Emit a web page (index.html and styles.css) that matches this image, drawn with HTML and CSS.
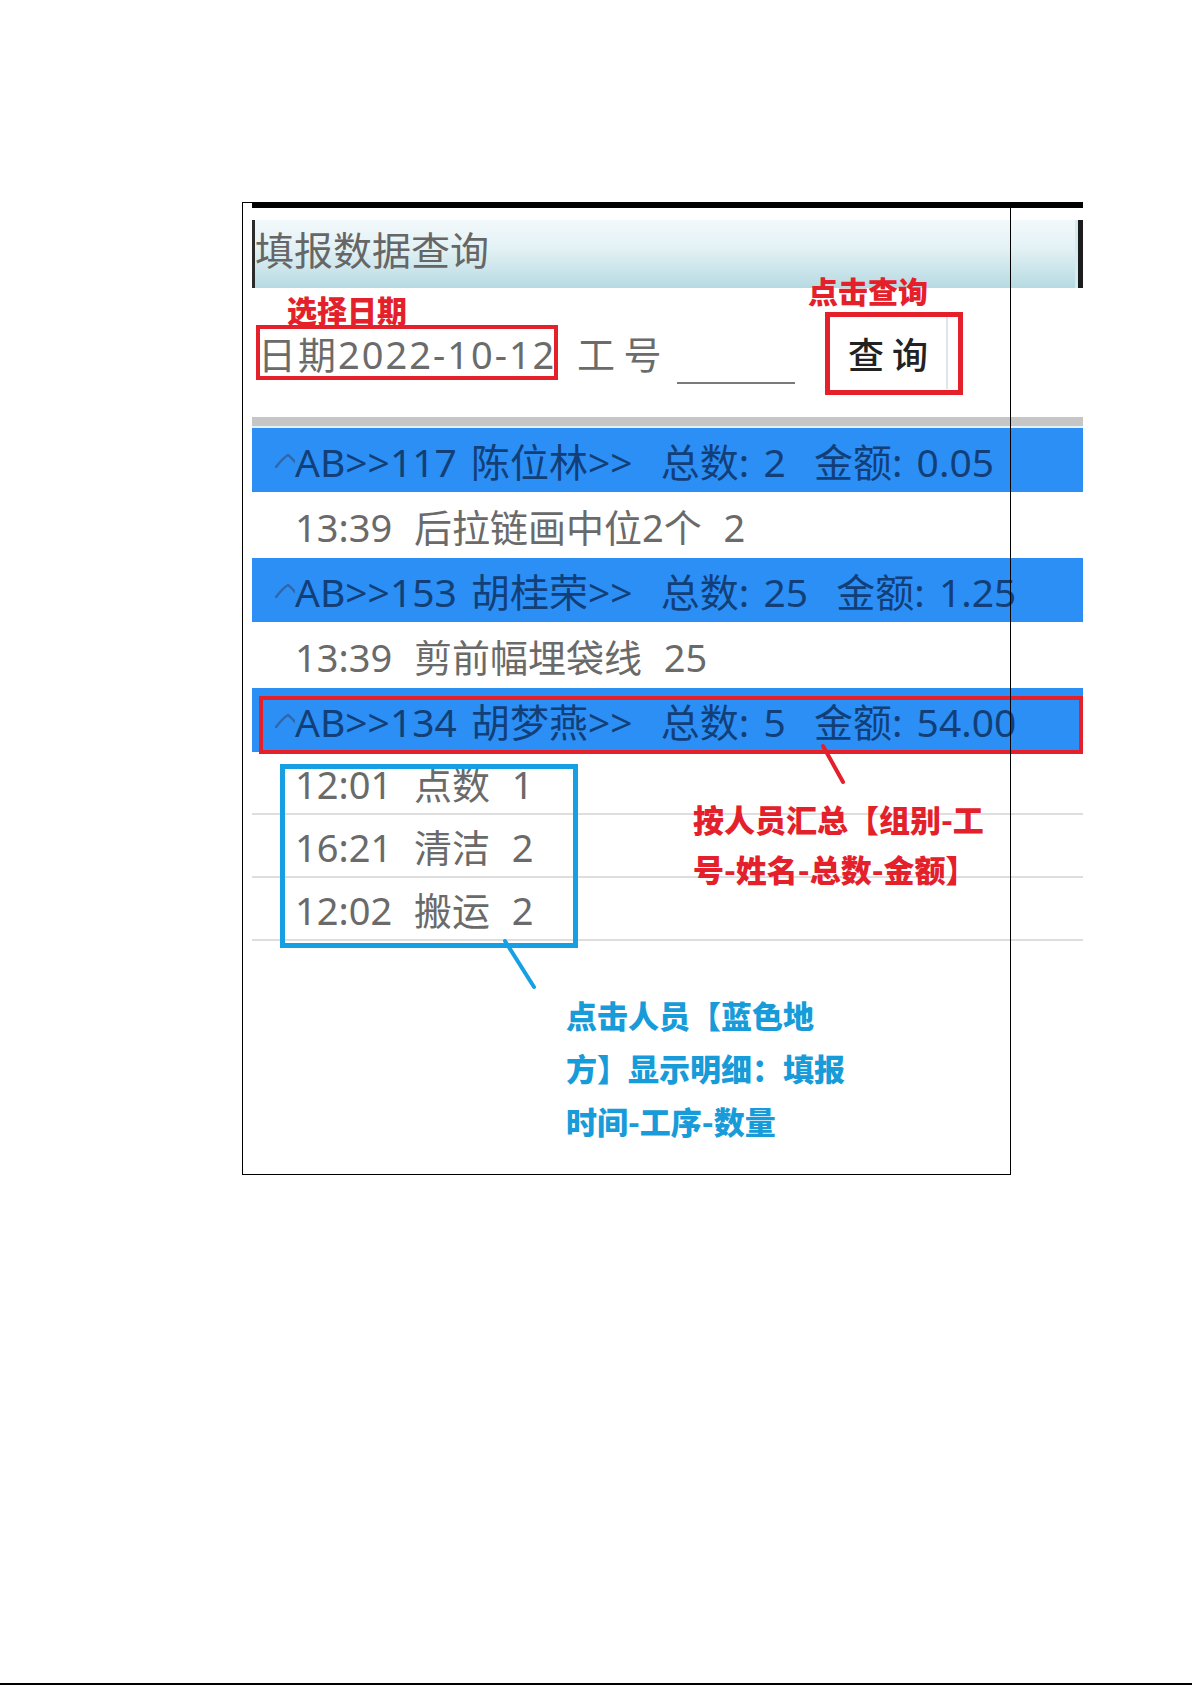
FILE: index.html
```html
<!DOCTYPE html>
<html lang="zh-CN">
<head>
    <meta charset="UTF-8">
    <meta name="viewport" content="width=device-width, initial-scale=1.0">
    <title>填报数据查询</title>
    <link rel="stylesheet" href="styles.css">
</head>
<body>
    <div class="page">
        <div class="frame">
            <div class="screen">
                <div class="status-bar"></div>
                <div class="title-bar">填报数据查询</div>

                <div class="query-row">
                    <span class="date">日期2022-10-12</span>
                    <span class="job-label">工 号</span>
                    <span class="job-input"></span>
                    <button type="button" class="query-btn">查 询</button>
                </div>
                <div class="divider"></div>

                <div class="group">
                    <div class="group-head"><svg class="caret" viewBox="0 0 20 16"><path d="M1 15 Q8 6 13 3 Q16 5 20 10"/></svg>AB&gt;&gt;117 陈位林&gt;&gt;  总数: 2  金额: 0.05</div>
                    <div class="item">13:39  后拉链画中位2个  2</div>
                </div>
                <div class="group">
                    <div class="group-head"><svg class="caret" viewBox="0 0 20 16"><path d="M1 15 Q8 6 13 3 Q16 5 20 10"/></svg>AB&gt;&gt;153 胡桂荣&gt;&gt;  总数: 25  金额: 1.25</div>
                    <div class="item">13:39  剪前幅埋袋线  25</div>
                </div>
                <div class="group open">
                    <div class="group-head"><svg class="caret" viewBox="0 0 20 16"><path d="M1 15 Q8 6 13 3 Q16 5 20 10"/></svg>AB&gt;&gt;134 胡梦燕&gt;&gt;  总数: 5  金额: 54.00</div>
                    <div class="item">12:01  点数  1</div>
                    <div class="item">16:21  清洁  2</div>
                    <div class="item">12:02  搬运  2</div>
                </div>
            </div>

            <!-- callouts drawn over the screen -->
            <div class="note note-red note-date">选择日期</div>
            <div class="mark mark-red mark-date"></div>
            <div class="note note-red note-query">点击查询</div>
            <div class="mark mark-red mark-btn"></div>
            <div class="mark mark-red mark-head"></div>
            <div class="mark mark-blue mark-items"></div>
            <svg class="pointers" width="769" height="973">
                <line x1="581" y1="544" x2="601" y2="580" stroke="#e4212b" stroke-width="4" stroke-linecap="round"/>
                <line x1="263" y1="739" x2="292" y2="785" stroke="#16a0e3" stroke-width="4" stroke-linecap="round"/>
            </svg>
            <div class="note note-red note-sum">按人员汇总【组别-工<br>号-姓名-总数-金额】</div>
            <div class="note note-blue note-detail">点击人员【蓝色地<br>方】显示明细：填报<br>时间-工序-数量</div>
        </div>
    </div>
</body>
</html>
```

FILE: styles.css
```css
* { margin: 0; padding: 0; box-sizing: border-box; }
body { background: #fff; font-family: "Noto Sans", "Noto Sans CJK SC", sans-serif; }
.page { width: 1192px; height: 1685px; padding: 199px 0 0 242px; border-bottom: 2px solid #000; }
.frame { position: relative; width: 769px; height: 973px; }
.frame::after { content: ""; position: absolute; inset: 0; border: 1px solid #000; z-index: 3; pointer-events: none; }

/* phone screen */
.screen { width: 831px; margin: 3px 0 0 10px; }
.status-bar { height: 6px; background: #000; }
.title-bar { height: 68px; margin-top: 12px; padding-bottom: 12px; display: flex; align-items: center; border-left: 3px solid #2b2b2b; border-right: 5px solid #1c1c1c; box-shadow: inset -3px 0 0 #d4ecef; background: linear-gradient(#f3f9fb, #e4f2f5 40%, #b6dae2); color: #666; font-family: "Noto Sans CJK SC", sans-serif; font-size: 39px; }

.query-row { height: 129px; display: flex; align-items: center; padding-left: 6px; color: #6b6b6b; font-size: 38px; }
.date { width: 319px; white-space: nowrap; letter-spacing: 2px; }
.job-label { width: 100px; white-space: pre; font-family: "Noto Sans CJK SC", sans-serif; }
.job-input { width: 118px; height: 62px; border-bottom: 2px solid #7a7a7a; }
.query-btn { margin-left: 35px; width: 118px; height: 73px; background: #fff; border: none; border-right: 2px solid #dfe5ec; color: #222; font-family: "Noto Sans CJK SC", sans-serif; font-size: 36px; font-weight: 500; white-space: pre; }

.divider { height: 11px; background: #c6c6c6; border-bottom: 2px solid #e4f1f5; }

.group-head { height: 64px; display: flex; align-items: center; padding-left: 23px; background: #2b8ff6; color: #133f78; font-size: 39px; white-space: pre; word-spacing: 4px; }
.caret { width: 20px; height: 16px; flex: none; }
.caret path { fill: none; stroke: #2f67ad; stroke-width: 2.4; stroke-linecap: round; }
.item { height: 66px; display: flex; align-items: center; padding-left: 43px; color: #6a6a6a; font-size: 38px; white-space: pre; word-spacing: 1px; }
.group.open .item { height: 63px; border-bottom: 2px solid #dedede; }

/* callouts */
.note { position: absolute; z-index: 2; font-family: "Noto Sans CJK SC", sans-serif; font-weight: 900; white-space: nowrap; }
.note-red { color: #e4212b; }
.note-blue { color: #179bd9; }
.note-date { left: 45px; top: 89px; font-size: 30px; line-height: 36px; }
.note-query { left: 566px; top: 70px; font-size: 30px; line-height: 36px; }
.note-sum { left: 451px; top: 592px; font-size: 31px; line-height: 50px; }
.note-detail { left: 324px; top: 786px; font-size: 31px; line-height: 53px; }

.mark { position: absolute; z-index: 2; }
.mark-red { border: 4px solid #e4212b; }
.mark-blue { border: 5px solid #16a0e3; }
.mark-date { left: 14px; top: 123px; width: 302px; height: 55px; }
.mark-btn { left: 583px; top: 110px; width: 138px; height: 83px; border-width: 5px; }
.mark-head { left: 17px; top: 494px; width: 824px; height: 58px; }
.mark-items { left: 38px; top: 562px; width: 298px; height: 184px; }
.pointers { position: absolute; left: 0; top: 0; z-index: 2; overflow: visible; }
```
